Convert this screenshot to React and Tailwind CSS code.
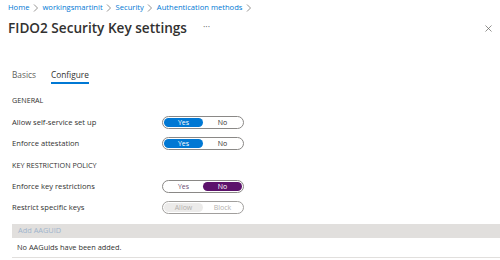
import { X } from "lucide-react";

const Chevron = () => (
    <svg width="6" height="8" viewBox="0 0 6 8" className="mx-[3.5px]">
        <path d="M1 0.5 L4.5 4 L1 7.5" fill="none" stroke="#8a8886" strokeWidth="0.9" />
    </svg>
);

const Toggle = ({ left, right, on, tone }) => {
    const active = tone === "purple" ? "bg-[#5c126b] text-white" : tone === "gray" ? "bg-[#ecebea] text-[#b3b0ad]" : "bg-[#0078d4] text-white";
    const idle = tone === "gray" ? "text-[#b3b0ad]" : tone === "purple" ? "text-[#6b4a70]" : "text-[#323130]";
    return (
        <div className={`flex w-[82px] h-[13px] rounded-full border ${tone === "gray" ? "border-[#a19f9d]" : "border-[#8a8886]"} p-[1px] text-[7px] leading-none`}>
            <div className={`flex-1 flex items-center justify-center rounded-full ${on === 0 ? active : idle}`}>{left}</div>
            <div className={`flex-1 flex items-center justify-center rounded-full ${on === 1 ? active : idle}`}>{right}</div>
        </div>
    );
};

const Row = ({ label, children }) => (
    <div className="flex items-center h-[21px]">
        <div className="w-[150px] text-[7.6px] text-[#323130]">{label}</div>
        {children}
    </div>
);

export default function App() {
    return (
        <div className="w-[500px] h-[260px] bg-white overflow-hidden" style={{ fontFamily: '"Open Sans", "Noto Sans", sans-serif' }}>
            <div className="flex items-center pl-[8px] pt-[2px] h-[13px] text-[7.6px] text-[#0078d4]">
                <span>Home</span><Chevron />
                <span>workingsmartinit</span><Chevron />
                <span>Security</span><Chevron />
                <span>Authentication methods</span><Chevron />
            </div>
            <div className="flex items-center h-[28px] pl-[8px] pr-[6px] pt-[2px]">
                <h1 className="text-[13.6px] font-semibold text-[#323130]">FIDO2 Security Key settings</h1>
                <span className="ml-[16px] text-[9px] text-[#605e5c] -mt-[2px]">···</span>
                <X className="ml-auto" size={11} color="#605e5c" strokeWidth={1.5} />
            </div>
            <div className="px-[12px] pt-[28px]">
                <div className="flex gap-[15px] text-[8.3px] h-[17px]">
                    <span className="text-[#605e5c]">Basics</span>
                    <span className="text-[#323130] border-b-2 border-[#0078d4] h-[15px]">Configure</span>
                </div>
                <div className="mt-[9px] text-[7.2px] text-[#323130] h-[12px]">GENERAL</div>
                <div className="mt-[5px]">
                    <Row label="Allow self-service set up"><Toggle left="Yes" right="No" on={0} /></Row>
                    <Row label="Enforce attestation"><Toggle left="Yes" right="No" on={0} /></Row>
                </div>
                <div className="mt-[6px] text-[7.2px] text-[#323130] h-[12px]">KEY RESTRICTION POLICY</div>
                <div className="mt-[4px]">
                    <Row label="Enforce key restrictions"><Toggle left="Yes" right="No" on={1} tone="purple" /></Row>
                    <Row label="Restrict specific keys"><Toggle left="Allow" right="Block" on={0} tone="gray" /></Row>
                </div>
            </div>
            <div className="ml-[12px] mt-[6px]">
                <div className="h-[14px] bg-[#e1dfdd] flex items-center pl-[6px] text-[7.4px] text-[#9fb4cc]">Add AAGUID</div>
                <div className="h-[20px] flex items-center pl-[5px] text-[7.4px] text-[#323130] border-b border-[#e1dfdd]">No AAGuids have been added.</div>
            </div>
        </div>
    );
}
